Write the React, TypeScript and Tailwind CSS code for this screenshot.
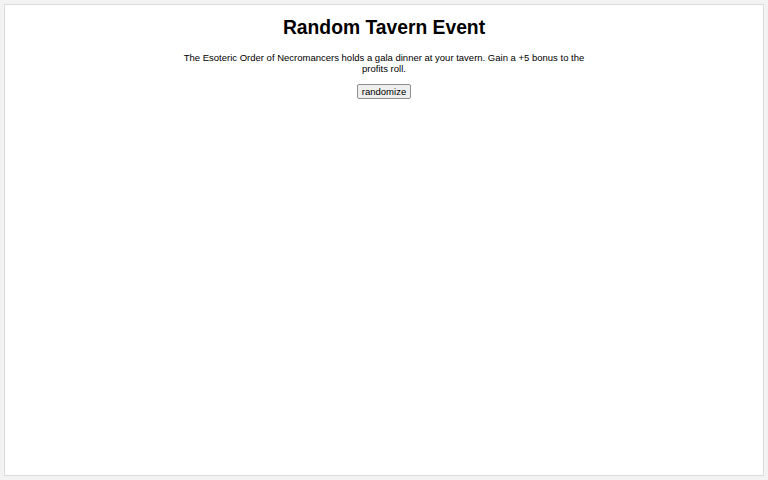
import React from 'react';

const EVENT_TEXT =
  'The Esoteric Order of Necromancers holds a gala dinner at your tavern. Gain a +5 bonus to the profits roll.';

export default function App() {
  const [text] = React.useState(EVENT_TEXT);

  return (
    <div className="h-[480px] w-[768px] bg-[#f3f3f3] p-[4px] font-['Liberation_Sans',Arial,sans-serif] text-black">
      <div className="flex h-full flex-col items-center border border-[#dcdcdc] bg-white">
        <h1 className="mt-[11px] text-[19.3px] font-bold leading-[24px]">Random Tavern Event</h1>
        <p className="mt-[12px] w-[410px] text-center text-[9.5px] leading-[11px]">{text}</p>
        <button className="mt-[10px] rounded-[2px] border border-[#8f8f8f] bg-[#efefef] px-[4px] py-[1px] text-[9.5px] leading-[11px]">
          randomize
        </button>
      </div>
    </div>
  );
}
